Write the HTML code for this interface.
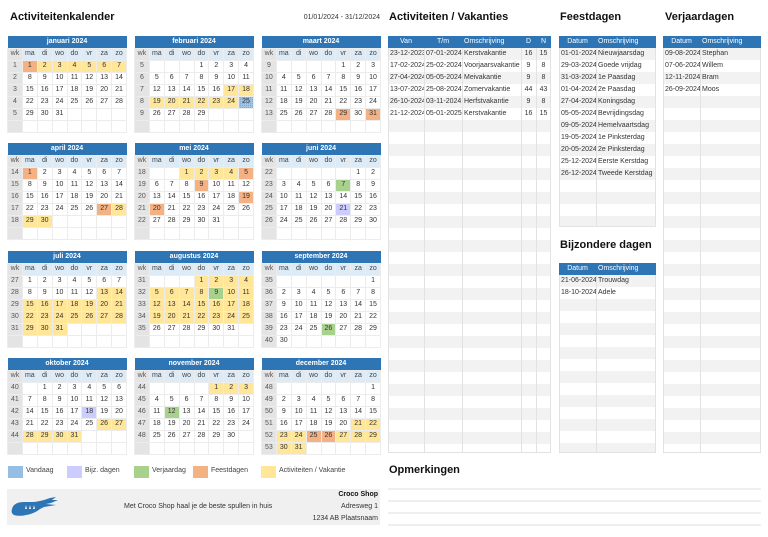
<!DOCTYPE html>
<html><head><meta charset="utf-8"><style>
*{margin:0;padding:0;box-sizing:border-box}
body{width:768px;height:537px;background:#fff;font-family:"Liberation Sans",sans-serif;color:#333;position:relative;overflow:hidden}
.a{position:absolute}
h1{position:absolute;font-size:11px;font-weight:bold;color:#111;white-space:nowrap}
table{border-collapse:collapse;table-layout:fixed}
.m{position:absolute;width:120px}
.m td{width:15px;height:12px;font-size:7px;text-align:center;border:1px solid #ececec;padding:0;line-height:10px}
.m .h td{background:#2e75b6;color:#fff;font-weight:bold;border:none}
.m .d td{background:#ddebf7;color:#444}
.m td.w{background:#e4e4e4;color:#555}
.m .d td.w{background:#e4e4e4}
td.y{background:#ffe699}td.o{background:#f4b183}td.g{background:#a9d18e}td.p{background:#ccccff}
td.t{background:#9dc3e6;background-image:radial-gradient(#7aaedb 0.6px,transparent 0.7px);background-size:2px 2px}
.bx{position:absolute;border:1px solid #e2e2e2;border-top:none;background:repeating-linear-gradient(to bottom,#f2f2f2 0 12px,#fff 12px 24px);background-position:0 12px}
.bx .hd{position:absolute;left:-1px;right:-1px;top:0;height:12px;background:#2e75b6}
.bx .v{position:absolute;top:12px;bottom:0;width:1px;background:#e2e2e2}
.r{position:absolute}
.r td{height:12px;font-size:7px;padding:0 2px;white-space:nowrap;overflow:hidden;line-height:12px}
.r tr.h td{color:#fff}
.c{text-align:center}
.lg{position:absolute;top:466px;width:15px;height:12px}
.lt{position:absolute;top:467px;font-size:7px;color:#444}
.ln{position:absolute;left:388px;width:373px;height:2px;background:#efefef}
</style></head><body>
<h1 style="left:10px;top:11px">Activiteitenkalender</h1>
<div class="a" style="left:300px;top:14px;font-size:7px;color:#333;width:80px;text-align:right">01/01/2024 - 31/12/2024</div>
<h1 style="left:389px;top:11px">Activiteiten / Vakanties</h1>
<h1 style="left:560px;top:11px">Feestdagen</h1>
<h1 style="left:665px;top:11px">Verjaardagen</h1>

<!-- januari -->
<table class="m" style="left:7px;top:36px"><tr class="h"><td colspan="8">januari 2024</td></tr>
<tr class="d"><td class="w">wk</td><td>ma</td><td>di</td><td>wo</td><td>do</td><td>vr</td><td>za</td><td>zo</td></tr>
<tr><td class="w">1</td><td class="o">1</td><td class="y">2</td><td class="y">3</td><td class="y">4</td><td class="y">5</td><td class="y">6</td><td class="y">7</td></tr>
<tr><td class="w">2</td><td>8</td><td>9</td><td>10</td><td>11</td><td>12</td><td>13</td><td>14</td></tr>
<tr><td class="w">3</td><td>15</td><td>16</td><td>17</td><td>18</td><td>19</td><td>20</td><td>21</td></tr>
<tr><td class="w">4</td><td>22</td><td>23</td><td>24</td><td>25</td><td>26</td><td>27</td><td>28</td></tr>
<tr><td class="w">5</td><td>29</td><td>30</td><td>31</td><td></td><td></td><td></td><td></td></tr>
<tr><td class="w"></td><td></td><td></td><td></td><td></td><td></td><td></td><td></td></tr></table>
<!-- februari -->
<table class="m" style="left:134px;top:36px"><tr class="h"><td colspan="8">februari 2024</td></tr>
<tr class="d"><td class="w">wk</td><td>ma</td><td>di</td><td>wo</td><td>do</td><td>vr</td><td>za</td><td>zo</td></tr>
<tr><td class="w">5</td><td></td><td></td><td></td><td>1</td><td>2</td><td>3</td><td>4</td></tr>
<tr><td class="w">6</td><td>5</td><td>6</td><td>7</td><td>8</td><td>9</td><td>10</td><td>11</td></tr>
<tr><td class="w">7</td><td>12</td><td>13</td><td>14</td><td>15</td><td>16</td><td class="y">17</td><td class="y">18</td></tr>
<tr><td class="w">8</td><td class="y">19</td><td class="y">20</td><td class="y">21</td><td class="y">22</td><td class="y">23</td><td class="y">24</td><td class="t">25</td></tr>
<tr><td class="w">9</td><td>26</td><td>27</td><td>28</td><td>29</td><td></td><td></td><td></td></tr>
<tr><td class="w"></td><td></td><td></td><td></td><td></td><td></td><td></td><td></td></tr></table>
<!-- maart -->
<table class="m" style="left:261px;top:36px"><tr class="h"><td colspan="8">maart 2024</td></tr>
<tr class="d"><td class="w">wk</td><td>ma</td><td>di</td><td>wo</td><td>do</td><td>vr</td><td>za</td><td>zo</td></tr>
<tr><td class="w">9</td><td></td><td></td><td></td><td></td><td>1</td><td>2</td><td>3</td></tr>
<tr><td class="w">10</td><td>4</td><td>5</td><td>6</td><td>7</td><td>8</td><td>9</td><td>10</td></tr>
<tr><td class="w">11</td><td>11</td><td>12</td><td>13</td><td>14</td><td>15</td><td>16</td><td>17</td></tr>
<tr><td class="w">12</td><td>18</td><td>19</td><td>20</td><td>21</td><td>22</td><td>23</td><td>24</td></tr>
<tr><td class="w">13</td><td>25</td><td>26</td><td>27</td><td>28</td><td class="o">29</td><td>30</td><td class="o">31</td></tr>
<tr><td class="w"></td><td></td><td></td><td></td><td></td><td></td><td></td><td></td></tr></table>
<!-- april -->
<table class="m" style="left:7px;top:143px"><tr class="h"><td colspan="8">april 2024</td></tr>
<tr class="d"><td class="w">wk</td><td>ma</td><td>di</td><td>wo</td><td>do</td><td>vr</td><td>za</td><td>zo</td></tr>
<tr><td class="w">14</td><td class="o">1</td><td>2</td><td>3</td><td>4</td><td>5</td><td>6</td><td>7</td></tr>
<tr><td class="w">15</td><td>8</td><td>9</td><td>10</td><td>11</td><td>12</td><td>13</td><td>14</td></tr>
<tr><td class="w">16</td><td>15</td><td>16</td><td>17</td><td>18</td><td>19</td><td>20</td><td>21</td></tr>
<tr><td class="w">17</td><td>22</td><td>23</td><td>24</td><td>25</td><td>26</td><td class="o">27</td><td class="y">28</td></tr>
<tr><td class="w">18</td><td class="y">29</td><td class="y">30</td><td></td><td></td><td></td><td></td><td></td></tr>
<tr><td class="w"></td><td></td><td></td><td></td><td></td><td></td><td></td><td></td></tr></table>
<!-- mei -->
<table class="m" style="left:134px;top:143px"><tr class="h"><td colspan="8">mei 2024</td></tr>
<tr class="d"><td class="w">wk</td><td>ma</td><td>di</td><td>wo</td><td>do</td><td>vr</td><td>za</td><td>zo</td></tr>
<tr><td class="w">18</td><td></td><td></td><td class="y">1</td><td class="y">2</td><td class="y">3</td><td class="y">4</td><td class="o">5</td></tr>
<tr><td class="w">19</td><td>6</td><td>7</td><td>8</td><td class="o">9</td><td>10</td><td>11</td><td>12</td></tr>
<tr><td class="w">20</td><td>13</td><td>14</td><td>15</td><td>16</td><td>17</td><td>18</td><td class="o">19</td></tr>
<tr><td class="w">21</td><td class="o">20</td><td>21</td><td>22</td><td>23</td><td>24</td><td>25</td><td>26</td></tr>
<tr><td class="w">22</td><td>27</td><td>28</td><td>29</td><td>30</td><td>31</td><td></td><td></td></tr>
<tr><td class="w"></td><td></td><td></td><td></td><td></td><td></td><td></td><td></td></tr></table>
<!-- juni -->
<table class="m" style="left:261px;top:143px"><tr class="h"><td colspan="8">juni 2024</td></tr>
<tr class="d"><td class="w">wk</td><td>ma</td><td>di</td><td>wo</td><td>do</td><td>vr</td><td>za</td><td>zo</td></tr>
<tr><td class="w">22</td><td></td><td></td><td></td><td></td><td></td><td>1</td><td>2</td></tr>
<tr><td class="w">23</td><td>3</td><td>4</td><td>5</td><td>6</td><td class="g">7</td><td>8</td><td>9</td></tr>
<tr><td class="w">24</td><td>10</td><td>11</td><td>12</td><td>13</td><td>14</td><td>15</td><td>16</td></tr>
<tr><td class="w">25</td><td>17</td><td>18</td><td>19</td><td>20</td><td class="p">21</td><td>22</td><td>23</td></tr>
<tr><td class="w">26</td><td>24</td><td>25</td><td>26</td><td>27</td><td>28</td><td>29</td><td>30</td></tr>
<tr><td class="w"></td><td></td><td></td><td></td><td></td><td></td><td></td><td></td></tr></table>
<!-- juli -->
<table class="m" style="left:7px;top:251px"><tr class="h"><td colspan="8">juli 2024</td></tr>
<tr class="d"><td class="w">wk</td><td>ma</td><td>di</td><td>wo</td><td>do</td><td>vr</td><td>za</td><td>zo</td></tr>
<tr><td class="w">27</td><td>1</td><td>2</td><td>3</td><td>4</td><td>5</td><td>6</td><td>7</td></tr>
<tr><td class="w">28</td><td>8</td><td>9</td><td>10</td><td>11</td><td>12</td><td class="y">13</td><td class="y">14</td></tr>
<tr><td class="w">29</td><td class="y">15</td><td class="y">16</td><td class="y">17</td><td class="y">18</td><td class="y">19</td><td class="y">20</td><td class="y">21</td></tr>
<tr><td class="w">30</td><td class="y">22</td><td class="y">23</td><td class="y">24</td><td class="y">25</td><td class="y">26</td><td class="y">27</td><td class="y">28</td></tr>
<tr><td class="w">31</td><td class="y">29</td><td class="y">30</td><td class="y">31</td><td></td><td></td><td></td><td></td></tr>
<tr><td class="w"></td><td></td><td></td><td></td><td></td><td></td><td></td><td></td></tr></table>
<!-- augustus -->
<table class="m" style="left:134px;top:251px"><tr class="h"><td colspan="8">augustus 2024</td></tr>
<tr class="d"><td class="w">wk</td><td>ma</td><td>di</td><td>wo</td><td>do</td><td>vr</td><td>za</td><td>zo</td></tr>
<tr><td class="w">31</td><td></td><td></td><td></td><td class="y">1</td><td class="y">2</td><td class="y">3</td><td class="y">4</td></tr>
<tr><td class="w">32</td><td class="y">5</td><td class="y">6</td><td class="y">7</td><td class="y">8</td><td class="g">9</td><td class="y">10</td><td class="y">11</td></tr>
<tr><td class="w">33</td><td class="y">12</td><td class="y">13</td><td class="y">14</td><td class="y">15</td><td class="y">16</td><td class="y">17</td><td class="y">18</td></tr>
<tr><td class="w">34</td><td class="y">19</td><td class="y">20</td><td class="y">21</td><td class="y">22</td><td class="y">23</td><td class="y">24</td><td class="y">25</td></tr>
<tr><td class="w">35</td><td>26</td><td>27</td><td>28</td><td>29</td><td>30</td><td>31</td><td></td></tr>
<tr><td class="w"></td><td></td><td></td><td></td><td></td><td></td><td></td><td></td></tr></table>
<!-- september -->
<table class="m" style="left:261px;top:251px"><tr class="h"><td colspan="8">september 2024</td></tr>
<tr class="d"><td class="w">wk</td><td>ma</td><td>di</td><td>wo</td><td>do</td><td>vr</td><td>za</td><td>zo</td></tr>
<tr><td class="w">35</td><td></td><td></td><td></td><td></td><td></td><td></td><td>1</td></tr>
<tr><td class="w">36</td><td>2</td><td>3</td><td>4</td><td>5</td><td>6</td><td>7</td><td>8</td></tr>
<tr><td class="w">37</td><td>9</td><td>10</td><td>11</td><td>12</td><td>13</td><td>14</td><td>15</td></tr>
<tr><td class="w">38</td><td>16</td><td>17</td><td>18</td><td>19</td><td>20</td><td>21</td><td>22</td></tr>
<tr><td class="w">39</td><td>23</td><td>24</td><td>25</td><td class="g">26</td><td>27</td><td>28</td><td>29</td></tr>
<tr><td class="w">40</td><td>30</td><td></td><td></td><td></td><td></td><td></td><td></td></tr></table>
<!-- oktober -->
<table class="m" style="left:7px;top:358px"><tr class="h"><td colspan="8">oktober 2024</td></tr>
<tr class="d"><td class="w">wk</td><td>ma</td><td>di</td><td>wo</td><td>do</td><td>vr</td><td>za</td><td>zo</td></tr>
<tr><td class="w">40</td><td></td><td>1</td><td>2</td><td>3</td><td>4</td><td>5</td><td>6</td></tr>
<tr><td class="w">41</td><td>7</td><td>8</td><td>9</td><td>10</td><td>11</td><td>12</td><td>13</td></tr>
<tr><td class="w">42</td><td>14</td><td>15</td><td>16</td><td>17</td><td class="p">18</td><td>19</td><td>20</td></tr>
<tr><td class="w">43</td><td>21</td><td>22</td><td>23</td><td>24</td><td>25</td><td class="y">26</td><td class="y">27</td></tr>
<tr><td class="w">44</td><td class="y">28</td><td class="y">29</td><td class="y">30</td><td class="y">31</td><td></td><td></td><td></td></tr>
<tr><td class="w"></td><td></td><td></td><td></td><td></td><td></td><td></td><td></td></tr></table>
<!-- november -->
<table class="m" style="left:134px;top:358px"><tr class="h"><td colspan="8">november 2024</td></tr>
<tr class="d"><td class="w">wk</td><td>ma</td><td>di</td><td>wo</td><td>do</td><td>vr</td><td>za</td><td>zo</td></tr>
<tr><td class="w">44</td><td></td><td></td><td></td><td></td><td class="y">1</td><td class="y">2</td><td class="y">3</td></tr>
<tr><td class="w">45</td><td>4</td><td>5</td><td>6</td><td>7</td><td>8</td><td>9</td><td>10</td></tr>
<tr><td class="w">46</td><td>11</td><td class="g">12</td><td>13</td><td>14</td><td>15</td><td>16</td><td>17</td></tr>
<tr><td class="w">47</td><td>18</td><td>19</td><td>20</td><td>21</td><td>22</td><td>23</td><td>24</td></tr>
<tr><td class="w">48</td><td>25</td><td>26</td><td>27</td><td>28</td><td>29</td><td>30</td><td></td></tr>
<tr><td class="w"></td><td></td><td></td><td></td><td></td><td></td><td></td><td></td></tr></table>
<!-- december -->
<table class="m" style="left:261px;top:358px"><tr class="h"><td colspan="8">december 2024</td></tr>
<tr class="d"><td class="w">wk</td><td>ma</td><td>di</td><td>wo</td><td>do</td><td>vr</td><td>za</td><td>zo</td></tr>
<tr><td class="w">48</td><td></td><td></td><td></td><td></td><td></td><td></td><td>1</td></tr>
<tr><td class="w">49</td><td>2</td><td>3</td><td>4</td><td>5</td><td>6</td><td>7</td><td>8</td></tr>
<tr><td class="w">50</td><td>9</td><td>10</td><td>11</td><td>12</td><td>13</td><td>14</td><td>15</td></tr>
<tr><td class="w">51</td><td>16</td><td>17</td><td>18</td><td>19</td><td>20</td><td class="y">21</td><td class="y">22</td></tr>
<tr><td class="w">52</td><td class="y">23</td><td class="y">24</td><td class="o">25</td><td class="o">26</td><td class="y">27</td><td class="y">28</td><td class="y">29</td></tr>
<tr><td class="w">53</td><td class="y">30</td><td class="y">31</td><td></td><td></td><td></td><td></td><td></td></tr></table>

<!-- legend -->
<div class="lg" style="left:8px;background:#9dc3e6;background-image:radial-gradient(#7aaedb 0.6px,transparent 0.7px);background-size:2px 2px"></div><div class="lt" style="left:26px">Vandaag</div>
<div class="lg" style="left:67px;background:#ccccff"></div><div class="lt" style="left:85px">Bijz. dagen</div>
<div class="lg" style="left:134px;background:#a9d18e"></div><div class="lt" style="left:152px">Verjaardag</div>
<div class="lg" style="left:193px;background:#f4b183"></div><div class="lt" style="left:211px">Feestdagen</div>
<div class="lg" style="left:261px;background:#ffe699"></div><div class="lt" style="left:279px">Activiteiten / Vakantie</div>

<!-- footer -->
<div class="a" style="left:7px;top:489px;width:373px;height:36px;background:#f0f0f0"></div>
<svg class="a" style="left:10px;top:496px" width="50" height="24" viewBox="0 0 50 24"><path fill="#2e75b6" d="M2 13 C3 8 8 6 14 6 L22 6 C26 6 30 5 34 4 L40 2 L46 1 L42 4 L48 4 L41 7 L36 8 L46 9 L34 11 L30 13 C26 16 22 18 16 19 C12 20 7 20 4 19 C2 18 1 16 2 13 Z"/><path fill="#f0f0f0" d="M16 9 l1 4 h-2z M20 9 l1 4 h-2z M24 9 l1 4 h-2z"/></svg>
<div class="a" style="left:124px;top:503px;font-size:7px;color:#333">Met Croco Shop haal je de beste spullen in huis</div>
<div class="a" style="left:280px;top:491px;width:98px;text-align:right;font-size:7px;font-weight:bold;color:#111">Croco Shop</div>
<div class="a" style="left:280px;top:503px;width:98px;text-align:right;font-size:7px;color:#333">Adresweg 1</div>
<div class="a" style="left:280px;top:515px;width:98px;text-align:right;font-size:7px;color:#333">1234 AB Plaatsnaam</div>

<!-- backgrounds of right tables -->
<div class="bx" style="left:388px;top:36px;width:163px;height:417px"><div class="hd"></div><div class="v" style="left:35px"></div><div class="v" style="left:73px"></div><div class="v" style="left:132px"></div><div class="v" style="left:147px"></div></div>
<div class="bx" style="left:559px;top:36px;width:97px;height:191px"><div class="hd"></div><div class="v" style="left:36px"></div></div>
<div class="bx" style="left:559px;top:263px;width:97px;height:190px"><div class="hd"></div><div class="v" style="left:36px"></div></div>
<div class="bx" style="left:663px;top:36px;width:98px;height:417px"><div class="hd"></div><div class="v" style="left:36px"></div></div>

<!-- activiteiten -->
<table class="r" style="left:388px;top:36px;width:163px">
<colgroup><col style="width:36px"><col style="width:38px"><col style="width:59px"><col style="width:15px"><col style="width:15px"></colgroup>
<tr class="h"><td class="c">Van</td><td class="c">T/m</td><td>Omschrijving</td><td class="c">D</td><td class="c">N</td></tr>
<tr><td>23-12-2023</td><td>07-01-2024</td><td>Kerstvakantie</td><td class="c">16</td><td class="c">15</td></tr>
<tr><td>17-02-2024</td><td>25-02-2024</td><td>Voorjaarsvakantie</td><td class="c">9</td><td class="c">8</td></tr>
<tr><td>27-04-2024</td><td>05-05-2024</td><td>Meivakantie</td><td class="c">9</td><td class="c">8</td></tr>
<tr><td>13-07-2024</td><td>25-08-2024</td><td>Zomervakantie</td><td class="c">44</td><td class="c">43</td></tr>
<tr><td>26-10-2024</td><td>03-11-2024</td><td>Herfstvakantie</td><td class="c">9</td><td class="c">8</td></tr>
<tr><td>21-12-2024</td><td>05-01-2025</td><td>Kerstvakantie</td><td class="c">16</td><td class="c">15</td></tr>
</table>

<!-- feestdagen -->
<table class="r" style="left:559px;top:36px;width:97px">
<colgroup><col style="width:37px"><col style="width:60px"></colgroup>
<tr class="h"><td class="c">Datum</td><td>Omschrijving</td></tr>
<tr><td>01-01-2024</td><td>Nieuwjaarsdag</td></tr>
<tr><td>29-03-2024</td><td>Goede vrijdag</td></tr>
<tr><td>31-03-2024</td><td>1e Paasdag</td></tr>
<tr><td>01-04-2024</td><td>2e Paasdag</td></tr>
<tr><td>27-04-2024</td><td>Koningsdag</td></tr>
<tr><td>05-05-2024</td><td>Bevrijdingsdag</td></tr>
<tr><td>09-05-2024</td><td>Hemelvaartsdag</td></tr>
<tr><td>19-05-2024</td><td>1e Pinksterdag</td></tr>
<tr><td>20-05-2024</td><td>2e Pinksterdag</td></tr>
<tr><td>25-12-2024</td><td>Eerste Kerstdag</td></tr>
<tr><td>26-12-2024</td><td>Tweede Kerstdag</td></tr>
</table>

<h1 style="left:560px;top:239px">Bijzondere dagen</h1>
<table class="r" style="left:559px;top:263px;width:97px">
<colgroup><col style="width:37px"><col style="width:60px"></colgroup>
<tr class="h"><td class="c">Datum</td><td>Omschrijving</td></tr>
<tr><td>21-06-2024</td><td>Trouwdag</td></tr>
<tr><td>18-10-2024</td><td>Adele</td></tr>
</table>

<!-- verjaardagen -->
<table class="r" style="left:663px;top:36px;width:98px">
<colgroup><col style="width:37px"><col style="width:61px"></colgroup>
<tr class="h"><td class="c">Datum</td><td>Omschrijving</td></tr>
<tr><td>09-08-2024</td><td>Stephan</td></tr>
<tr><td>07-06-2024</td><td>Willem</td></tr>
<tr><td>12-11-2024</td><td>Bram</td></tr>
<tr><td>26-09-2024</td><td>Moos</td></tr>
</table>

<h1 style="left:389px;top:464px">Opmerkingen</h1>
<div class="ln" style="top:488px"></div>
<div class="ln" style="top:500px"></div>
<div class="ln" style="top:512px"></div>
<div class="ln" style="top:524px"></div>
</body></html>
